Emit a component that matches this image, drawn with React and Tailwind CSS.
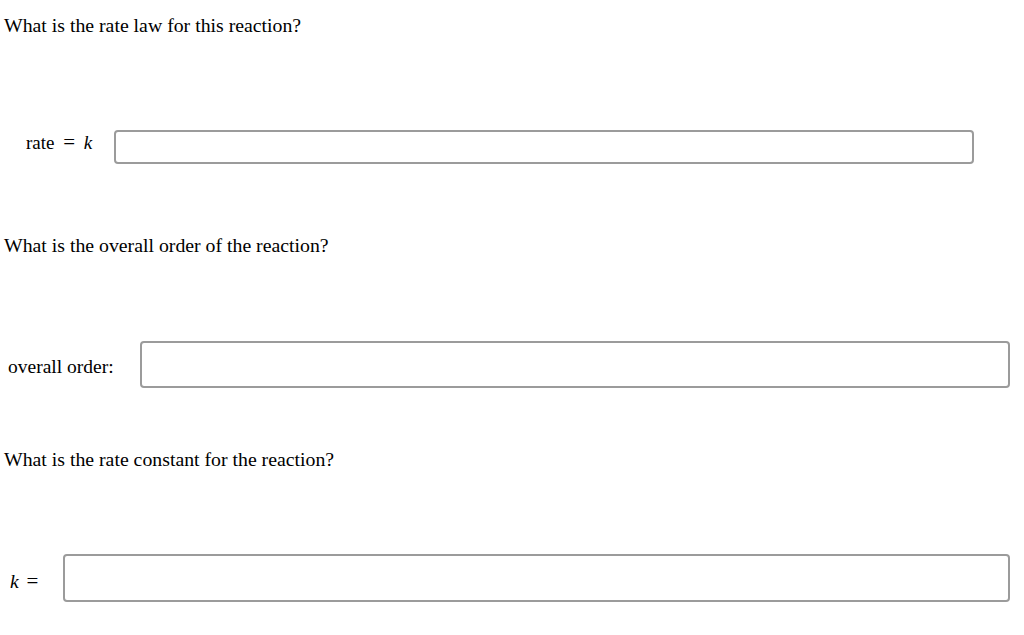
import React from "react";

const Question = ({ children, className }) => (
  <p className={`pl-[4px] text-[19.8px] leading-[22px] text-black ${className}`}>{children}</p>
);

const Box = ({ className }) => (
  <input
    type="text"
    className={`border-2 border-[#9b9b9b] rounded-[4px] bg-white outline-none ${className}`}
  />
);

const App = () => {
  return (
    <div className="w-[1024px] h-[635px] bg-white font-['Liberation_Serif',serif] overflow-hidden">
      <div className="flex flex-col">
        {/* rate law */}
        <Question className="mt-[14px]">What is the rate law for this reaction?</Question>
        <div className="flex items-start mt-[94px]">
          <span className="w-[114px] shrink-0 pl-[26px] mt-[1px] text-[19px] leading-[22px]">
            rate <span className="mx-[4px] text-[21px]">=</span> <i>k</i>
          </span>
          <Box className="w-[860px] h-[34px]" />
        </div>

        {/* overall order */}
        <Question className="mt-[70px]">What is the overall order of the reaction?</Question>
        <div className="flex items-center mt-[85px]">
          <span className="w-[140px] shrink-0 pl-[8px] pt-[5px] text-[19.5px] leading-[22px]">overall order:</span>
          <Box className="w-[870px] h-[47px]" />
        </div>

        {/* rate constant */}
        <Question className="mt-[60px]">What is the rate constant for the reaction?</Question>
        <div className="flex items-center mt-[84px]">
          <span className="w-[63px] shrink-0 pl-[10px] pt-[7px] text-[19.5px] leading-[22px]">
            <i>k</i> <span className="ml-[3px] text-[21px]">=</span>
          </span>
          <Box className="w-[947px] h-[48px]" />
        </div>
      </div>
    </div>
  );
};

export default App;
